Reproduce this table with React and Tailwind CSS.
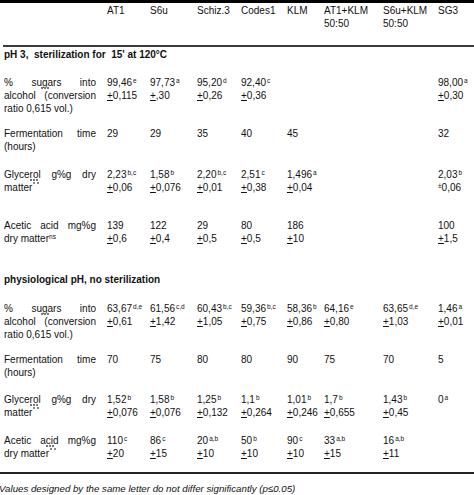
import React from 'react'

const grid = "grid grid-cols-[107px_43px_47px_44px_46px_37px_59px_55px_36px]"

const heads = [["AT1"], ["S6u"], ["Schiz.3"], ["Codes1"], ["KLM"], ["AT1+KLM", "50:50"], ["S6u+KLM", "50:50"], ["SG3"]]

const sec1 = {
    sugars: [["99,46", "e", "0,115"], ["97,73", "a", ",30"], ["95,20", "d", "0,26"], ["92,40", "c", "0,36"], null, null, null, ["98,00", "a", "0,30"]],
    ferm: [["29"], ["29"], ["35"], ["40"], ["45"], null, null, ["32"]],
    glyc: [["2,23", "b,c", "0,06"], ["1,58", "b", "0,076"], ["2,20", "b,c", "0,01"], ["2,51", "c", "0,38"], ["1,496", "a", "0,04"], null, null, ["2,03", "b", "0,06", true]],
    acet: [["139", "", "0,6"], ["122", "", "0,4"], ["29", "", "0,5"], ["80", "", "0,5"], ["186", "", "10"], null, null, ["100", "", "1,5"]],
}

const sec2 = {
    sugars: [["63,67", "d,e", "0,61"], ["61,56", "c,d", "1,42"], ["60,43", "b,c", "1,05"], ["59,36", "b,c", "0,75"], ["58,36", "b", "0,86"], ["64,16", "e", "0,80"], ["63,65", "d,e", "1,03"], ["1,46", "a", "0,01"]],
    ferm: [["70"], ["75"], ["80"], ["80"], ["90"], ["75"], ["70"], ["5"]],
    glyc: [["1,52", "b", "0,076"], ["1,58", "b", "0,076"], ["1,25", "b", "0,132"], ["1,1", "b", "0,264"], ["1,01", "b", "0,246"], ["1,7", "b", "0,655"], ["1,43", "b", "0,45"], ["0", "a"]],
    acet: [["110", "c", "20"], ["86", "c", "15"], ["20", "a,b", "10"], ["50", "b", "10"], ["90", "c", "10"], ["33", "a,b", "15"], ["16", "a,b", "11"], null],
}

function Cell({ d }) {
    if (!d) return <div />
    const [v, s, e, odd] = d
    return (
        <div>
            <div>{v}{s ? <sup className="text-[6.5px] ml-[1px]">{s}</sup> : null}</div>
            {e ? (
                odd
                    ? <div><sup className="text-[6.5px]">±</sup>{e}</div>
                    : <div><span className="underline underline-offset-[1px]">+</span>{e}</div>
            ) : null}
        </div>
    )
}

function Row({ label, data, className }) {
    return (
        <div className={grid + " " + className}>
            <div className="pl-[4px] pr-[11px]">{label}</div>
            {data.map((d, i) => <Cell key={i} d={d} />)}
        </div>
    )
}

function Spread({ words }) {
    return (
        <div className="flex justify-between">
            {words.map((w, i) => <span key={i}>{w}</span>)}
        </div>
    )
}

// small dotted marks left under some words in the scan
const Dots = ({ className }) => (
    <span className={"absolute h-0 w-[8px] border-b-2 border-dotted border-[#777] " + className} />
)

const Stars = () => <span className="inline-block align-top ml-[1px] mt-[1px] w-[6px] h-0 border-b-2 border-dotted border-[#888]" />

const sugarsLabel = (
    <>
        <div className="flex justify-between">
            <span>%</span>
            <span className="relative">sugars<Dots className="left-[10px] top-[11px]" /></span>
            <span>into</span>
        </div>
        <Spread words={["alcohol", "(conversion"]} />
        <div>ratio 0,615 vol.)</div>
    </>
)

const fermLabel = (
    <>
        <Spread words={["Fermentation", "time"]} />
        <div>(hours)</div>
    </>
)

const glycLabel = (
    <>
        <div className="flex justify-between">
            <span className="relative">Glycerol<Dots className="left-[26px] top-[11px]" /></span>
            <span>g%g</span>
            <span>dry</span>
        </div>
        <div>matter<Stars /></div>
    </>
)

const acetLabel = (ns) => (
    <>
        <div className="flex justify-between">
            <span>Acetic</span>
            <span className="relative">acid{ns ? null : <Dots className="left-[6px] top-[11px]" />}</span>
            <span>mg%g</span>
        </div>
        <div>dry matter{ns ? <sup className="text-[6.5px]">ns</sup> : <Stars />}</div>
    </>
)

export default function App() {
    return (
        <div className="w-[474px] h-[495px] bg-white text-[#111] text-[10px] leading-[13px] overflow-hidden" style={{ fontFamily: '"Liberation Sans", Arial, sans-serif' }}>
            <div className="h-[3px] bg-black" />
            <div className={grid + " h-[42px] pt-[1px]"}>
                <div />
                {heads.map((h, i) => (
                    <div key={i}>{h.map((t, j) => <div key={j}>{t}</div>)}</div>
                ))}
            </div>
            <div className="h-[2px] ml-[3px] bg-[#3a3a3a]" />

            <div className="pl-[4px] mt-[1px] font-bold whitespace-pre">pH 3,  sterilization for  15' at 120°C</div>
            <Row className="mt-[15px]" label={sugarsLabel} data={sec1.sugars} />
            <Row className="mt-[12px]" label={fermLabel} data={sec1.ferm} />
            <Row className="mt-[15px]" label={glycLabel} data={sec1.glyc} />
            <Row className="mt-[25px]" label={acetLabel(true)} data={sec1.acet} />

            <div className="pl-[4px] mt-[28px] font-bold">physiological pH, no sterilization</div>
            <Row className="mt-[16px]" label={sugarsLabel} data={sec2.sugars} />
            <Row className="mt-[12px]" label={fermLabel} data={sec2.ferm} />
            <Row className="mt-[14px]" label={glycLabel} data={sec2.glyc} />
            <Row className="mt-[15px]" label={acetLabel(false)} data={sec2.acet} />

            <div className="mt-[12px] h-[2px] bg-[#222]" />
            <div className="mt-[8px] -ml-[1px] italic text-[9.7px]">Values designed by the same letter do not differ significantly (p≤0.05)</div>
        </div>
    )
}
